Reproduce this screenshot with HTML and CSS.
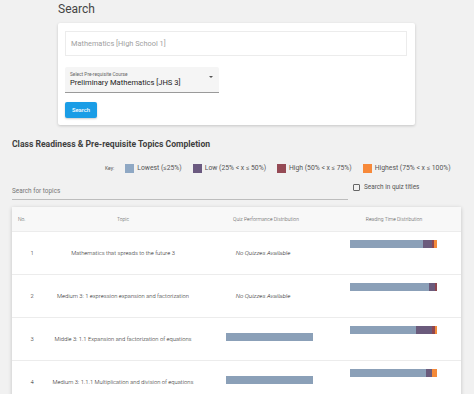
FILE: index.html
```html
<!DOCTYPE html>
<html>
<head>
<meta charset="utf-8">
<link rel="stylesheet" href="styles.css">
</head>
<body>
<div class="page">
  <section class="search-section">
    <h1 class="search-title">Search</h1>
    <div class="search-card">
      <div class="text-input">Mathematics [High School 1]</div>
      <div class="select">
        <div class="select-text">
          <div class="select-label">Select Pre-requisite Course</div>
          <div class="select-value">Preliminary Mathematics [JHS 3]</div>
        </div>
        <span class="select-arrow"></span>
      </div>
      <button class="btn">Search</button>
    </div>
  </section>

  <h2 class="section-title">Class Readiness &amp; Pre-requisite Topics Completion</h2>

  <div class="key">
    <span class="key-label">Key:</span>
    <span class="key-item"><span class="sw sw-lowest"></span>Lowest (≤25%)</span>
    <span class="key-item"><span class="sw sw-low"></span>Low (25% &lt; x ≤ 50%)</span>
    <span class="key-item"><span class="sw sw-high"></span>High (50% &lt; x ≤ 75%)</span>
    <span class="key-item"><span class="sw sw-highest"></span>Highest (75% &lt; x ≤ 100%)</span>
  </div>

  <div class="filter-row">
    <div class="topic-search">Search for topics</div>
    <label class="check"><span class="box"></span>Search in quiz titles</label>
  </div>

  <div class="table-card">
    <div class="trow thead">
      <div class="c-no">No.</div>
      <div class="c-topic">Topic</div>
      <div class="c-quiz">Quiz Performance Distribution</div>
      <div class="c-read">Reading Time Distribution</div>
    </div>

    <div class="trow">
      <div class="c-no num">1</div>
      <div class="c-topic">Mathematics that spreads to the future 3</div>
      <div class="c-quiz"><span class="noquiz">No Quizzes Available</span></div>
      <div class="c-read"><div class="bar">
        <span class="s-lowest" style="width:73px"></span><span class="s-low" style="width:9px"></span><span class="s-high" style="width:2px"></span><span class="s-highest" style="width:3px"></span>
      </div></div>
    </div>

    <div class="trow">
      <div class="c-no num">2</div>
      <div class="c-topic">Medium 3: 1 expression expansion and factorization</div>
      <div class="c-quiz"><span class="noquiz">No Quizzes Available</span></div>
      <div class="c-read"><div class="bar">
        <span class="s-lowest" style="width:79px"></span><span class="s-low" style="width:6px"></span><span class="s-high" style="width:2px"></span>
      </div></div>
    </div>

    <div class="trow">
      <div class="c-no num">3</div>
      <div class="c-topic">Middle 3: 1.1 Expansion and factorization of equations</div>
      <div class="c-quiz qcell"><div class="qbar"></div></div>
      <div class="c-read"><div class="bar">
        <span class="s-lowest" style="width:66px"></span><span class="s-low" style="width:16px"></span><span class="s-high" style="width:3px"></span><span class="s-highest" style="width:2px"></span>
      </div></div>
    </div>

    <div class="trow">
      <div class="c-no num">4</div>
      <div class="c-topic">Medium 3: 1.1.1 Multiplication and division of equations</div>
      <div class="c-quiz qcell"><div class="qbar"></div></div>
      <div class="c-read"><div class="bar">
        <span class="s-lowest" style="width:76px"></span><span class="s-low" style="width:6px"></span><span class="s-highest" style="width:5px"></span>
      </div></div>
    </div>
  </div>
</div>
</body>
</html>
```

FILE: styles.css
```css
html, body {
  margin: 0;
  padding: 0;
}
body {
  background: #f1f1f1;
  font-family: Roboto, "Liberation Sans", Arial, sans-serif;
  color: #333;
  width: 474px;
  height: 394px;
  overflow: hidden;
}
.page {
  padding: 0 13px 0 12px;
}
.search-section {
  margin: 0 46px;
}
.search-title {
  margin: 0;
  padding-top: 2px;
  height: 21px;
  font-size: 12px;
  font-weight: 400;
  color: #444;
  line-height: 14px;
}
.search-card {
  background: #fff;
  box-shadow: 0 1px 3px rgba(0,0,0,0.18);
  border-radius: 2px;
  padding: 8px 8px 7px 7px;
  height: 87px;
  display: flex;
  flex-direction: column;
  align-items: flex-start;
}
.text-input {
  align-self: stretch;
  height: 25px;
  border: 1px solid #ececec;
  box-sizing: border-box;
  padding: 0 5px;
  display: flex;
  align-items: center;
  font-size: 7.4px;
  color: #a0a0a0;
}
.select {
  margin-top: 11px;
  width: 154px;
  height: 26px;
  box-sizing: border-box;
  background: #f5f5f5;
  border-bottom: 1px solid #9a9a9a;
  border-radius: 2px 2px 0 0;
  display: flex;
  align-items: center;
  padding: 0 6px 0 5px;
}
.select-text {
  flex: 1;
}
.select-label {
  font-size: 4.8px;
  color: #666;
  line-height: 6px;
}
.select-value {
  font-size: 7.6px;
  color: #222;
  line-height: 10px;
}
.select-arrow {
  width: 0;
  height: 0;
  border-left: 2.5px solid transparent;
  border-right: 2.5px solid transparent;
  border-top: 2.5px solid #555;
  margin-top: -5px;
}
.btn {
  margin-top: 9px;
  width: 32px;
  height: 16px;
  background: #1a9de6;
  color: #fff;
  border: 0;
  border-radius: 2px;
  font-family: inherit;
  font-size: 5.8px;
  font-weight: 500;
  padding: 0;
  box-shadow: 0 1px 2px rgba(0,0,0,0.2);
}
.section-title {
  margin: 13px 0 0;
  font-size: 8.6px;
  font-weight: 700;
  color: #3f3f3f;
  line-height: 12px;
}
.key {
  margin-top: 13px;
  display: flex;
  align-items: center;
  padding-left: 93px;
  font-size: 6.8px;
  color: #555;
  height: 10px;
  white-space: nowrap;
}
.key-label {
  font-size: 5px;
  margin-right: 11px;
}
.key-item {
  display: flex;
  align-items: center;
  margin-right: 11px;
}
.sw {
  width: 9px;
  height: 9px;
  margin-right: 3px;
  display: inline-block;
  flex: none;
}
.sw-lowest { background: #8fa8c4; }
.sw-low { background: #6b5a80; }
.sw-high { background: #954a55; }
.sw-highest { background: #f7893a; }

.filter-row {
  margin-top: 9px;
  display: flex;
  align-items: flex-start;
}
.topic-search {
  width: 336px;
  height: 18px;
  box-sizing: border-box;
  border-bottom: 1px solid #bdbdbd;
  font-size: 6.4px;
  color: #777;
  padding-top: 5px;
}
.check {
  margin-left: 5px;
  display: flex;
  align-items: center;
  font-size: 6.4px;
  color: #555;
  padding-top: 1px;
}
.box {
  width: 7px;
  height: 7px;
  border: 1px solid #666;
  box-sizing: border-box;
  border-radius: 1px;
  margin-right: 4px;
}

.table-card {
  margin-top: 7px;
  background: #fff;
  box-shadow: 0 1px 4px rgba(0,0,0,0.2);
  width: 449px;
}
.trow {
  display: grid;
  grid-template-columns: 40px 142px 144px 112px;
  height: 43px;
  border-top: 1px solid #ececec;
  box-sizing: border-box;
  align-items: center;
  font-size: 5.8px;
  font-weight: 300;
  color: #2a2a2a;
  white-space: nowrap;
}
.trow > div {
  text-align: center;
}
.thead {
  height: 24px;
  border-top: 0;
  background: #f8f8f8;
  font-size: 5px;
  color: #555;
}
.thead .c-no {
  text-align: left;
  padding-left: 6px;
}
.noquiz {
  font-style: italic;
  font-size: 6.2px;
  color: #1a1a1a;
  margin-right: 6px;
}
.trow > .qcell {
  align-self: start;
  padding-top: 15px;
}
.qbar {
  margin-left: 32px;
  width: 87px;
  height: 8px;
  background: #8ba0b8;
}
.trow > .c-read {
  align-self: start;
  padding-top: 8px;
}
.thead > .c-read {
  align-self: center;
  padding-top: 0;
}
.bar {
  margin-left: 12px;
  width: 87px;
  height: 8px;
  display: flex;
}
.bar span {
  display: block;
  height: 100%;
}
.s-lowest { background: #8ba0b8; }
.s-low { background: #6b5b7c; }
.s-high { background: #8e4650; }
.s-highest { background: #f48a3a; }
```
